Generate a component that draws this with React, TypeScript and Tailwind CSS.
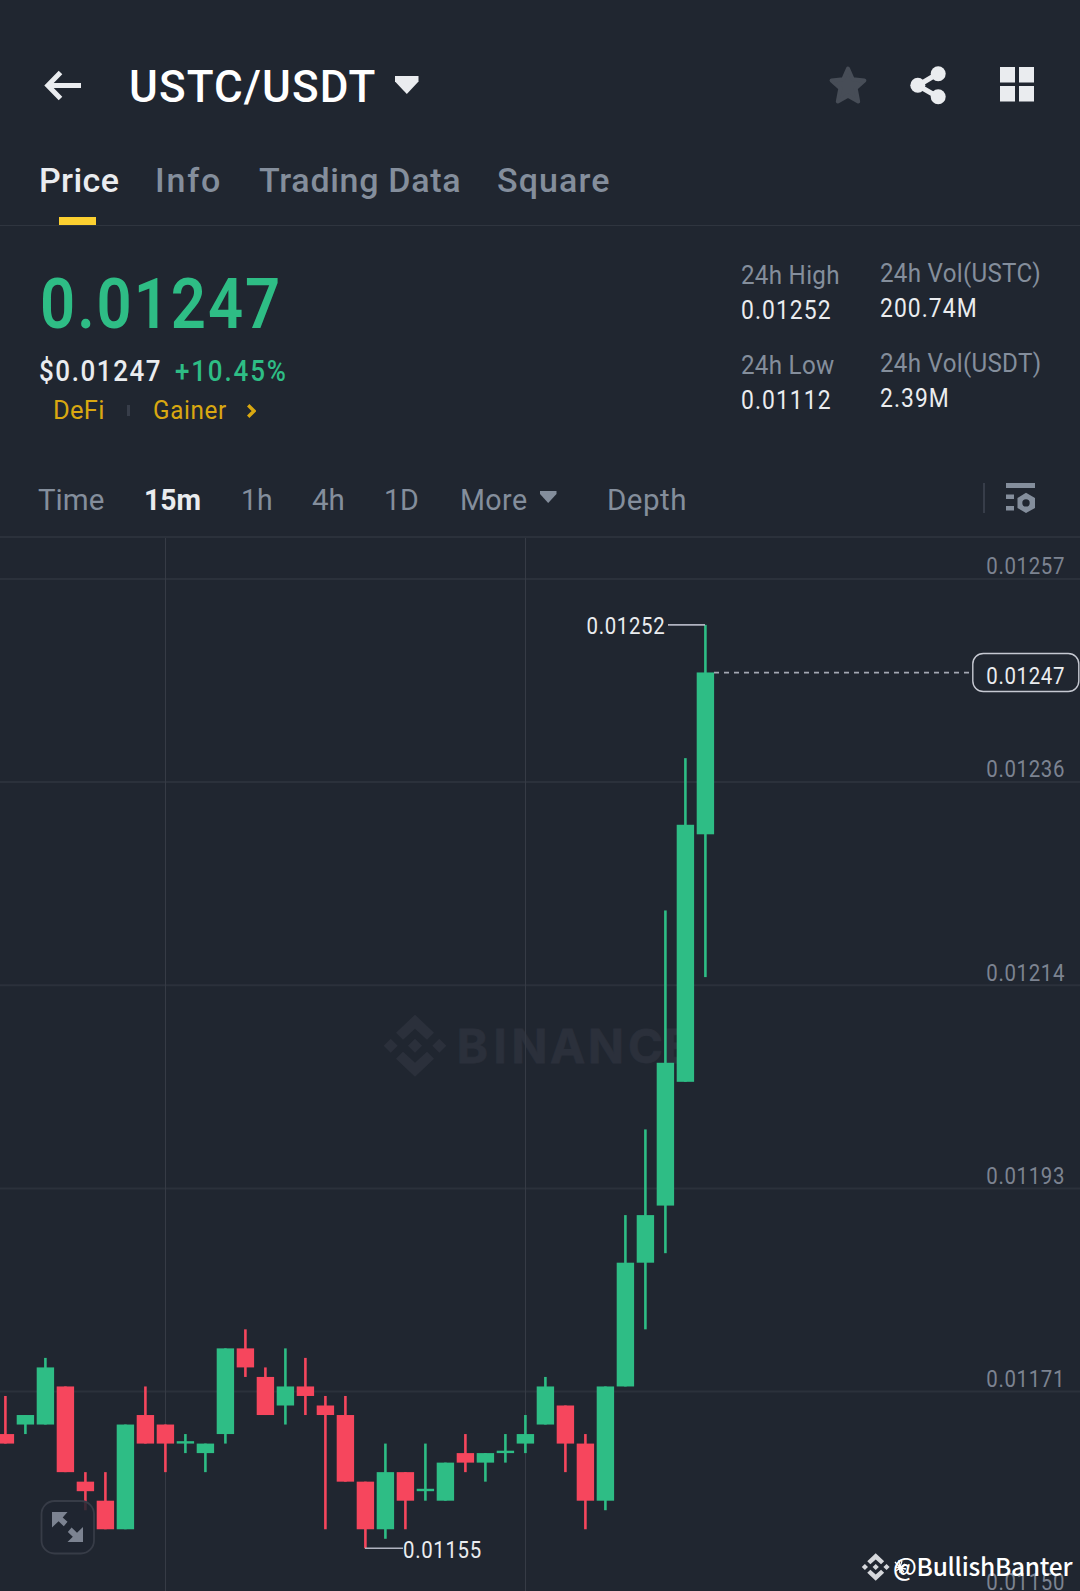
import clsx from 'clsx';

interface Candle {
  up: boolean;
  high: number;
  top: number;
  bottom: number;
  low: number;
}

// [direction, high, body top, body bottom, low], prices in 0.00001 USDT
const rawCandles: [number, number, number, number, number][] = [
  [0, 1171, 1167, 1166, 1166],
  [1, 1169, 1169, 1168, 1167],
  [1, 1175, 1174, 1168, 1168],
  [0, 1172, 1172, 1163, 1163],
  [0, 1163, 1162, 1161, 1159],
  [0, 1163, 1160, 1157, 1157],
  [1, 1168, 1168, 1157, 1157],
  [0, 1172, 1169, 1166, 1166],
  [0, 1168, 1168, 1166, 1163],
  [1, 1167, 1166, 1166, 1165],
  [1, 1166, 1166, 1165, 1163],
  [1, 1176, 1176, 1167, 1166],
  [0, 1178, 1176, 1174, 1173],
  [0, 1174, 1173, 1169, 1169],
  [1, 1176, 1172, 1170, 1168],
  [0, 1175, 1172, 1171, 1169],
  [0, 1171, 1170, 1169, 1157],
  [0, 1171, 1169, 1162, 1162],
  [0, 1162, 1162, 1157, 1155],
  [1, 1166, 1163, 1157, 1156],
  [0, 1163, 1163, 1160, 1157],
  [1, 1166, 1161, 1161, 1160],
  [1, 1164, 1164, 1160, 1160],
  [0, 1167, 1165, 1164, 1163],
  [1, 1165, 1165, 1164, 1162],
  [1, 1167, 1165, 1165, 1164],
  [1, 1169, 1167, 1166, 1165],
  [1, 1173, 1172, 1168, 1168],
  [0, 1170, 1170, 1166, 1163],
  [0, 1167, 1166, 1160, 1157],
  [1, 1172, 1172, 1160, 1159],
  [1, 1190, 1185, 1172, 1172],
  [1, 1199, 1190, 1185, 1178],
  [1, 1222, 1206, 1191, 1186],
  [1, 1238, 1231, 1204, 1204],
  [1, 1252, 1247, 1230, 1215],
];

const candles: Candle[] = rawCandles.map(([up, high, top, bottom, low]) => ({
  up: up === 1,
  high,
  top,
  bottom,
  low,
}));

const CHART_TOP = 538;
const TICK = 9.52;
const yOf = (price: number) => 1548.3 - CHART_TOP - (price - 1155) * TICK;
const xOf = (index: number) => 5.4 + index * 20;

const gridLines = [
  { y: 41, label: '0.01257' },
  { y: 244, label: '0.01236' },
  { y: 447.2, label: '0.01214' },
  { y: 650.4, label: '0.01193' },
  { y: 853.5, label: '0.01171' },
  { y: 1056.6, label: '0.01150' },
];

const tabs = [
  { name: 'Price', className: 'w-[116px] tracking-[0.4px] text-[#eaecef]' },
  { name: 'Info', className: 'w-[104px] tracking-[1.8px] text-[#848e9c]' },
  { name: 'Trading Data', className: 'w-[238px] tracking-[0.7px] text-[#848e9c]' },
  { name: 'Square', className: 'w-[120px] tracking-[1.1px] text-[#848e9c]' },
];

const intervals = [
  { name: 'Time', className: 'w-[106px]' },
  { name: '15m', className: 'w-[97px] origin-left scale-x-[0.96] font-bold text-[#eaecef]' },
  { name: '1h', className: 'w-[71px] origin-left scale-x-[0.96]' },
  { name: '4h', className: 'w-[72px]' },
  { name: '1D', className: 'w-[76px] origin-left scale-x-[0.97]' },
];

const BinanceMark = () => (
  <g>
    <path d="M0 -31 19 -13 12 -6 0 -17 -12 -6 -19 -13Z" />
    <path d="M0 31 19 13 12 6 0 17 -12 6 -19 13Z" />
    <path d="M0 -7 7 0 0 7 -7 0Z" />
    <path d="M-24.3 -7 -17.3 0 -24.3 7 -31.3 0Z" />
    <path d="M24.3 -7 31.3 0 24.3 7 17.3 0Z" />
  </g>
);

const ChartLabel = ({ x, y, fill, children }: { x: number; y: number; fill: string; children: string }) => (
  <text
    transform={`translate(${x} ${y}) scale(0.88 1)`}
    fontSize="23.2"
    letterSpacing="0.75"
    fill={fill}
  >
    {children}
  </text>
);

const Header = () => (
  <header className="flex h-[122px] items-center pt-[50px] pl-[44px] pr-[45px]">
    <svg className="h-[32px] w-[38px]" viewBox="0 0 38 32" fill="none" stroke="#eaecef" strokeWidth="5">
      <path d="M37 15.500H4M16.500 2.500 3.800 15.500 16.500 28.500" />
    </svg>
    <h1 className="mt-[2px] ml-[47px] w-[250px] text-[44px] leading-none font-medium tracking-[1.100px] whitespace-nowrap text-white">
      USTC/USDT
    </h1>
    <svg className="ml-[16px] h-[20px] w-[24px]" viewBox="0 0 24 20">
      <path d="M0 0H23.500V5.500L11.800 18 0 5.500Z" fill="#eaecef" />
    </svg>
    <div className="ml-auto flex items-center pb-[2px]">
      <svg className="h-[40px] w-[40px]" viewBox="0 0 40 40">
        <path
          d="M20 3.500 24.700 14.200 36.400 15.400 27.700 23.300 30.200 36.500 20 30.700 9.800 36.500 12.300 23.300 3.600 15.400 15.300 14.200Z"
          fill="#474d57"
          stroke="#474d57"
          strokeWidth="4"
          strokeLinejoin="round"
        />
      </svg>
      <svg className="ml-[41px] h-[40px] w-[38px]" viewBox="0 0 38 40" fill="#eaecef">
        <path d="M9 20.500 29 8.500M9 20.500 29 32" stroke="#eaecef" strokeWidth="5" />
        <circle cx="8.800" cy="20.300" r="7.500" />
        <circle cx="29.200" cy="8.800" r="7.500" />
        <circle cx="29.200" cy="31.800" r="7.500" />
      </svg>
      <svg className="ml-[53px] h-[36px] w-[35px]" viewBox="0 0 35 36" fill="#eaecef">
        <path d="M0 0H15V15.500H0ZM19 0H34V15.500H19ZM0 19H15V34.500H0ZM19 19H34V34.500H19Z" />
      </svg>
    </div>
  </header>
);

const Tabs = () => (
  <nav className="relative flex h-[104px] border-b border-[#2f353f] pt-[41px] pl-[39px] text-[34px] leading-none font-medium">
    {tabs.map((tab) => (
      <span key={tab.name} className={clsx('whitespace-nowrap', tab.className)}>
        {tab.name}
      </span>
    ))}
    <span className="absolute bottom-0 left-[59px] h-[8px] w-[37px] bg-[#fcd030]" />
  </nav>
);

const Stat = ({ label, value }: { label: string; value: string }) => (
  <div className="h-[90px] w-[139px] text-[26px] leading-none whitespace-nowrap">
    <p className="origin-left scale-x-[0.93] tracking-[0.300px] text-[#848e9c]">{label}</p>
    <p className="mt-[9px] origin-left scale-x-[0.88] tracking-[1.200px] text-[#eaecef]">{value}</p>
  </div>
);

const Ticker = () => (
  <section className="flex h-[230px] pl-[39px]">
    <div className="w-[701.5px] pt-[43px]">
      <p className="ml-px h-[70px] origin-left scale-x-[0.88] text-[70px] leading-none font-semibold tracking-[2.2px] text-[#2ebd85]">
        0.01247
      </p>
      <div className="mt-[18px] flex text-[29.5px] leading-none font-medium">
        <span className="w-[136px] origin-left scale-x-[0.88] tracking-[1.800px] text-[#eaecef]">$0.01247</span>
        <span className="origin-left scale-x-[0.88] tracking-[2.100px] text-[#2ebd85]">+10.45%</span>
      </div>
      <div className="mt-[11px] flex h-[26px] items-center pl-[14px] text-[25.5px] leading-none text-[#d9a811]">
        <span className="w-[74px] tracking-[0.300px]">DeFi</span>
        <span className="h-[11px] w-[3px] bg-[#373d49]" />
        <span className="ml-[23px] w-[94px] origin-left scale-x-[0.95] tracking-[0.700px]">Gainer</span>
        <svg className="h-[14px] w-[9px]" viewBox="0 0 9 14" fill="none" stroke="#d9a811" strokeWidth="3.400">
          <path d="M1.200 1.200 7 7 1.200 12.800" />
        </svg>
      </div>
    </div>
    <div className="pt-[36px]">
      <Stat label="24h High" value="0.01252" />
      <Stat label="24h Low" value="0.01112" />
    </div>
    <div className="pt-[34px]">
      <Stat label="24h Vol(USTC)" value="200.74M" />
      <Stat label="24h Vol(USDT)" value="2.39M" />
    </div>
  </section>
);

const IntervalBar = () => (
  <div className="flex h-[82px] items-start border-b-2 border-[#2b313b] pt-[30px] pl-[38px] text-[29.5px] leading-none text-[#848e9c]">
    {intervals.map((item) => (
      <span key={item.name} className={item.className}>
        {item.name}
      </span>
    ))}
    <span className="w-[80px] origin-left scale-x-[0.97] tracking-[0.400px]">More</span>
    <svg className="mt-[5px] h-[12px] w-[17px]" viewBox="0 0 17 12">
      <path d="M0 0H16.500V3L8.200 12 0 3Z" fill="#848e9c" />
    </svg>
    <span className="ml-[50px] tracking-[0.500px]">Depth</span>
    <div className="-mt-[3px] mr-[44px] ml-auto flex items-center">
      <span className="h-[30px] w-[2px] bg-[#373d49]" />
      <svg className="ml-[21px] h-[30px] w-[30px]" viewBox="0 0 30 30" fill="#848e9c">
        <path d="M0 0H29V5H0ZM0 11.500H8V16H0ZM0 23H8V27.500H0Z" />
        <path
          fillRule="evenodd"
          d="M20 9.800 29 15V25L20 30 11.500 25V15ZM20 16.200A3.700 3.700 0 1 0 20 23.600A3.700 3.700 0 1 0 20 16.200Z"
        />
      </svg>
    </div>
  </div>
);

const Chart = () => (
  <svg className="block h-[1053px] w-[1080px]" viewBox="0 0 1080 1053">
    <g fill="#2b303b">
      <g transform="translate(415 507.700)">
        <BinanceMark />
      </g>
      <text
        x="456.800 493.500 511.500 550 588 628 663.500"
        y="524.700"
        fontSize="47.200"
        stroke="#2b303b"
        strokeWidth="0.800"
        className="font-['Inter',sans-serif] font-bold"
      >
        BINANCE
      </text>
    </g>
    {gridLines.map((line) => (
      <path key={line.label} d={`M0 ${line.y}H1080`} stroke="#2b313b" strokeWidth="2" />
    ))}
    <path d="M165.500 0V1053M525.500 0V1053" stroke="#363b45" strokeWidth="1" />
    {gridLines.map((line) => (
      <ChartLabel key={line.label} x={986.3} y={line.y - 4.6} fill="#7c8391">
        {line.label}
      </ChartLabel>
    ))}

    {candles.map((candle, index) => {
      const top = yOf(candle.top);
      const height = yOf(candle.bottom) - top;
      return (
        <g key={index} fill={candle.up ? '#2ebd85' : '#f6465d'}>
          <rect
            x={xOf(index) - 1.3}
            y={yOf(candle.high)}
            width={2.6}
            height={yOf(candle.low) - yOf(candle.high)}
          />
          {/* a doji still gets a thin body */}
          <rect x={xOf(index) - 8.7} y={height ? top : top - 2.4} width={17.4} height={height || 2.4} />
        </g>
      );
    })}

    {/* highest and lowest price */}
    <path d={`M668 ${yOf(1252)}H705M365 ${yOf(1155)}H403`} stroke="#b0b3c0" strokeWidth="1.600" />
    <ChartLabel x={586.5} y={96} fill="#eaecef">
      0.01252
    </ChartLabel>
    <ChartLabel x={403} y={1020} fill="#eaecef">
      0.01155
    </ChartLabel>

    {/* last price */}
    <path d="M714 134.700H970" stroke="#a4a8b3" strokeWidth="1.800" strokeDasharray="5 5" />
    <rect x="972.800" y="115.500" width="106" height="38" rx="10.500" fill="#202630" stroke="#c6c9d2" strokeWidth="1.400" />
    <ChartLabel x={986.3} y={145.9} fill="#eaecef">
      0.01247
    </ChartLabel>

    {/* fullscreen button */}
    <rect x="41.500" y="963" width="52.500" height="52.500" rx="13" fill="#202630" fillOpacity="0.85" stroke="#373c47" strokeWidth="1.800" />
    <g fill="#7c8391">
      <path d="M52 974H67.500L62.700 979.400 67.500 983.800 63.800 988.300 58.600 983.200 52 989.500Z" />
      <path d="M83 1004H67.500L72.800 998.800 67.800 994 71.600 989.500 77 994.700 83 989Z" />
    </g>

    {/* author watermark */}
    <g transform="translate(875.700 1029) scale(0.445)" fill="#d6d8dc">
      <BinanceMark />
    </g>
    <text
      x="893"
      y="1038"
      fontSize="24.500"
      textLength="179.500"
      fill="#ffffff"
      className="font-['Noto_Sans_CJK_SC',sans-serif] font-medium"
    >
      @BullishBanter
    </text>
    <path
      d="M895 1024 904 1034M899 1022 900 1035M896 1033 905 1026M902 1023 899 1032M895 1029 906 1031"
      fill="none"
      stroke="#ffffff"
      strokeWidth="1.300"
    />
  </svg>
);

export default function App() {
  return (
    <div className="h-[1591px] w-[1080px] overflow-hidden bg-[#202630] font-['Roboto',sans-serif]">
      <Header />
      <Tabs />
      <Ticker />
      <IntervalBar />
      <Chart />
    </div>
  );
}
